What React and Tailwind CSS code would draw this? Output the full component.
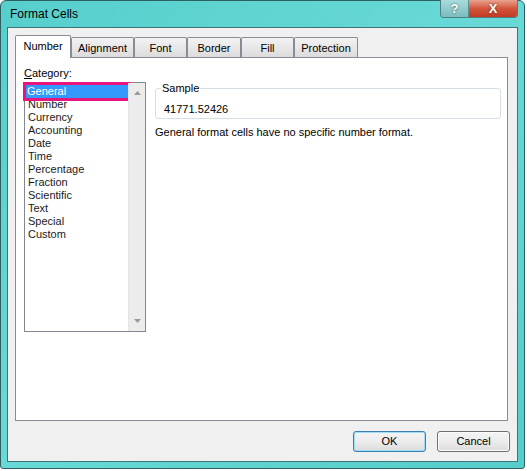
const categories = ["General", "Number", "Currency", "Accounting", "Date", "Time", "Percentage", "Fraction", "Scientific", "Text", "Special", "Custom"];

const tabs = [
  { name: "Number", w: "w-[56px]" },
  { name: "Alignment", w: "w-[63px]" },
  { name: "Font", w: "w-[53px]" },
  { name: "Border", w: "w-[54px]" },
  { name: "Fill", w: "w-[53px]" },
  { name: "Protection", w: "w-[64px]" },
];

function Tab({ t, active }) {
  if (active) {
    return (
      <div className={`${t.w} h-[23px] -mb-px relative z-10 bg-white border border-b-0 border-[#898c95] rounded-t-[2px] flex items-center justify-center pb-[1px]`}>
        {t.name}
      </div>
    );
  }
  return (
    <div className={`${t.w} h-[20px] bg-gradient-to-b from-[#f3f3f3] to-[#dcdcdc] border border-b-0 border-[#898c95] rounded-t-[2px] flex items-center justify-center pt-[1px]`}>
      {t.name}
    </div>
  );
}

function Button({ label, def }) {
  return (
    <div
      className={`w-[73px] h-[21px] rounded-[3px] border flex items-center justify-center bg-gradient-to-b from-[#f4f4f4] via-[#ececec] to-[#dcdcdc] ${
        def ? "border-[#3c7fb1] shadow-[inset_0_0_0_1px_#9fdcf5]" : "border-[#707070] shadow-[inset_0_0_0_1px_#fcfcfc]"
      }`}
    >
      {label}
    </div>
  );
}

export default function App() {
  return (
    <div className="w-[527px] h-[471px] bg-white text-[11px] leading-[13px] text-black" style={{ fontFamily: '"Liberation Sans", Arial, sans-serif' }}>
      <div className="w-[525px] h-[469px] rounded-t-[6px] rounded-b-[3px] border border-[#2f5f63] bg-gradient-to-br from-[#56cfcc] via-[#68d9d6] to-[#55cdca] flex flex-col px-[6px] pb-[6px]">
        {/* title bar */}
        <div className="h-[26px] flex items-start">
          <div className="pt-[7px] pl-[3px] text-[12px] text-black">Format Cells</div>
          <div className="ml-auto -mt-px flex h-[18px] rounded-b-[4px] border border-t-0 border-[#4d7f83] overflow-hidden">
            <div className="w-[28px] bg-gradient-to-b from-[#a9dcdc] to-[#7bbcbc] border-r border-[#5d8f92] flex items-center justify-center text-white font-bold text-[13px] [text-shadow:0_0_2px_#2d4d50]">?</div>
            <div className="w-[48px] bg-gradient-to-b from-[#e8a28f] via-[#d2553c] to-[#c23a22] flex items-center justify-center text-white font-bold text-[13px] [text-shadow:0_0_2px_#5a1a10]">X</div>
          </div>
        </div>

        {/* client area */}
        <div className="flex-1 border border-[#3e7479] bg-[#f0f0f0] flex flex-col pl-[7px] pr-[8px] pt-[7px]">
          <div className="flex items-end h-[22px]">
            {tabs.map((t, i) => (
              <Tab key={t.name} t={t} active={i === 0} />
            ))}
          </div>

          <div className="w-[493px] h-[364px] bg-white border border-[#898c95] flex pl-[8px] pt-[9px]">
            {/* category list */}
            <div className="w-[122px] flex flex-col">
              <div className="h-[13px] mb-[2px]">
                <span className="underline">C</span>ategory:
              </div>
              <div className="h-[250px] border border-[#828790] flex">
                <div className="flex-1 pt-[2px] pl-px">
                  {categories.map((c, i) =>
                    i === 0 ? (
                      <div key={c} className="h-[13px] pl-[1px] bg-[#3399ff] text-white outline-[3px] outline-solid outline-[#e8157d]">
                        {c}
                      </div>
                    ) : (
                      <div key={c} className="h-[13px] pl-[2px] text-[#1a1a1a]">
                        {c}
                      </div>
                    )
                  )}
                </div>
                <div className="w-[17px] bg-[#ececec] border-l border-[#e4e4e4] flex flex-col items-center justify-between py-[8px]">
                  <svg width="7" height="4" viewBox="0 0 7 4">
                    <path d="M0 4 L3.5 0 L7 4 Z" fill="#9a9a9a" />
                  </svg>
                  <svg width="7" height="4" viewBox="0 0 7 4">
                    <path d="M0 0 L3.5 4 L7 0 Z" fill="#9a9a9a" />
                  </svg>
                </div>
              </div>
            </div>

            {/* sample */}
            <div className="ml-[9px] w-[346px] pt-[15px]">
              <fieldset className="h-[37px] border border-[#d5dfe5] rounded-[3px] px-[8px] pt-[8px]">
                <legend className="-ml-[3px] px-[1px] leading-[13px]">Sample</legend>
                <div className="leading-[13px]">41771.52426</div>
              </fieldset>
              <div className="mt-[7px]">General format cells have no specific number format.</div>
            </div>
          </div>

          <div className="flex justify-end gap-[11px] mt-[10px] -mr-[1px]">
            <Button label="OK" def />
            <Button label="Cancel" />
          </div>
        </div>
      </div>
    </div>
  );
}
